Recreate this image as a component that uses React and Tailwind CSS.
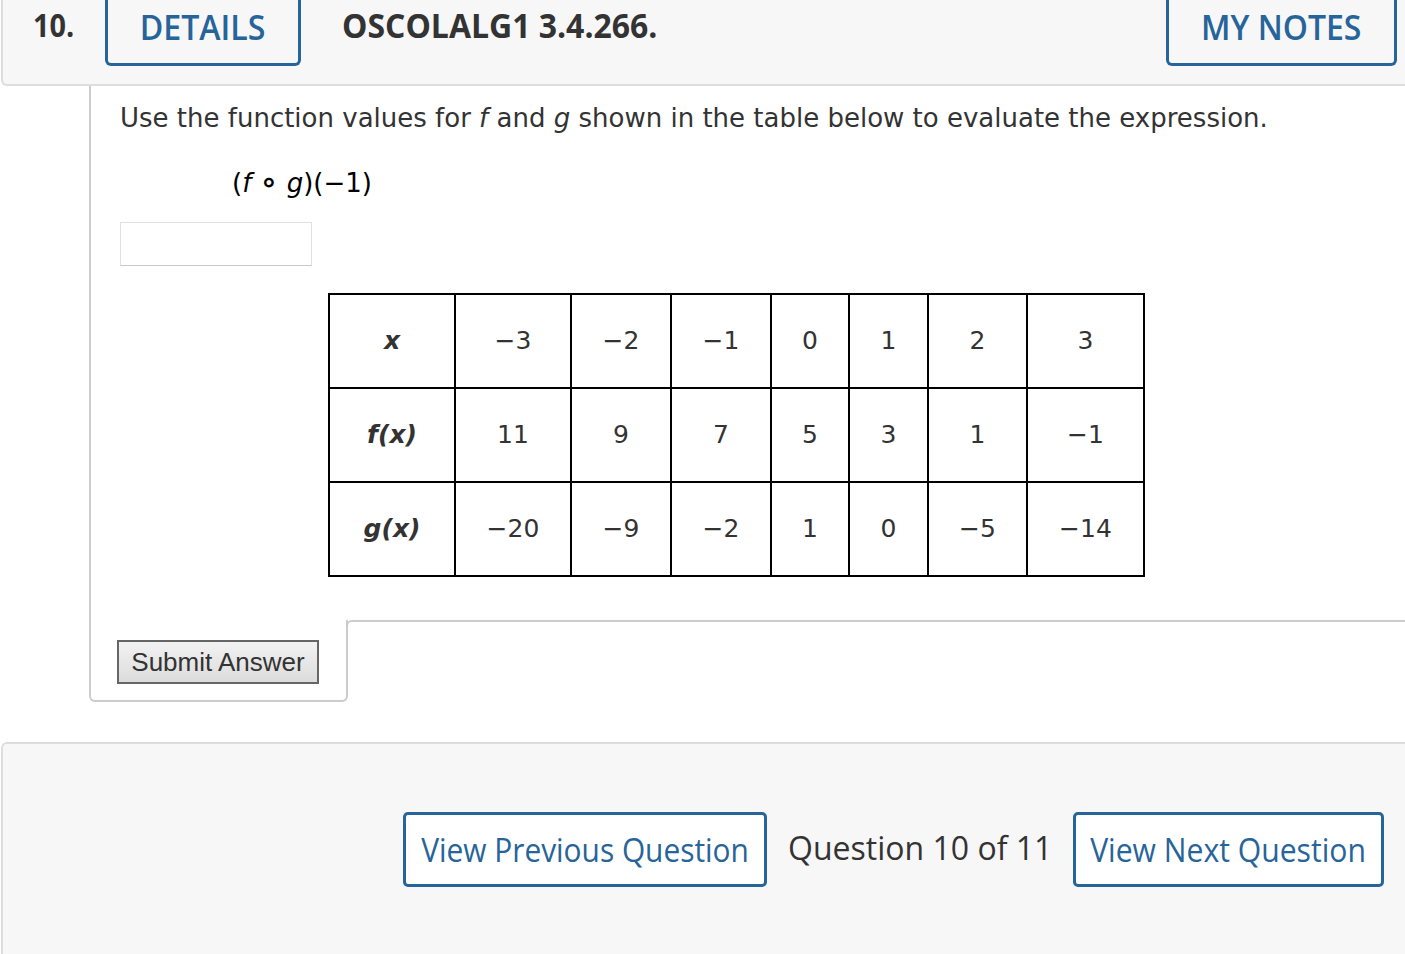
import React from 'react'

const blue = 'text-[#26649a]'

function Cell({ children, w, head }) {
  return (
    <td className={`border-2 border-black text-center align-middle ${w} ${head ? 'font-bold italic' : ''}`}>
      {children}
    </td>
  )
}

export default function App() {
  const widths = ['w-[126px]', 'w-[116px]', 'w-[100px]', 'w-[100px]', 'w-[78px]', 'w-[79px]', 'w-[99px]', 'w-[117px]']
  const rows = [
    [<i key="x">x</i>, '−3', '−2', '−1', '0', '1', '2', '3'],
    [<span key="f"><i>f</i>(<i>x</i>)</span>, '11', '9', '7', '5', '3', '1', '−1'],
    [<span key="g"><i>g</i>(<i>x</i>)</span>, '−20', '−9', '−2', '1', '0', '−5', '−14'],
  ]

  return (
    <div className="w-[1405px] h-[954px] overflow-hidden bg-white text-[#333]">
      {/* Header */}
      <div className="ml-[1px] h-[86px] bg-[#f7f7f7] border-l-2 border-b-2 border-[#dddddd] rounded-bl-[6px] flex items-start font-['Open_Sans',sans-serif]">
        <div className="ml-[30px] mt-[3px] text-[32px] font-bold leading-[44px] inline-block scale-x-[0.9] origin-left">10.</div>
        <div className="ml-[26px] w-[196px] h-[66px] border-[3px] border-t-0 border-[#26649a] rounded-b-[6px] flex items-center justify-center">
          <span className={`inline-block text-[34px] font-semibold ${blue} scale-x-[0.945] leading-none -mt-[10px]`}>DETAILS</span>
        </div>
        <div className="ml-[41px] mt-[3px] text-[34px] font-bold leading-[44px] inline-block scale-x-[0.94] origin-left whitespace-nowrap">OSCOLALG1 3.4.266.</div>
        <div className="ml-auto mr-[8px] w-[231px] h-[66px] border-[3px] border-t-0 border-[#26649a] rounded-b-[6px] flex items-center justify-center">
          <span className={`inline-block text-[34px] font-semibold ${blue} scale-x-[0.94] leading-none -mt-[10px] whitespace-nowrap`}>MY NOTES</span>
        </div>
      </div>

      {/* Question */}
      <div className="ml-[89px] font-['DejaVu_Sans',Verdana,sans-serif]">
        <div className="border-l-2 border-[#cccccc] pl-[29px] pt-[13px] pb-[43px]">
          <p className="text-[26px] leading-[38px] whitespace-nowrap">
            Use the function values for <i>f</i> and <i>g</i> shown in the table below to evaluate the expression.
          </p>
          <p className="mt-[27px] ml-[112px] text-[26px] leading-[38px] text-black">
            (<i>f</i> <span className="text-[30px] leading-none font-bold">∘</span> <i>g</i>)(−1)
          </p>
          <div className="mt-[20px] w-[192px] h-[44px] border border-[#e0e0e0] border-b-[#c8c8c8]" />
          <table className="mt-[27px] ml-[208px] border-collapse text-[25px]">
            <tbody>
              {rows.map((r, i) => (
                <tr key={i} className="h-[94px]">
                  {r.map((c, j) => (
                    <Cell key={j} w={widths[j]} head={j === 0}>{c}</Cell>
                  ))}
                </tr>
              ))}
            </tbody>
          </table>
        </div>
        <div className="flex">
          <div className="w-[259px] h-[82px] border-l-2 border-r-2 border-b-2 border-[#cccccc] rounded-b-[6px] pl-[26px] pt-[20px]">
            <button className="h-[44px] w-[202px] border-2 border-[#666] bg-gradient-to-b from-[#f2f2f2] to-[#dcdcdc] text-[26px] text-[#333] font-['Liberation_Sans',Arial,sans-serif] leading-none">
              Submit Answer
            </button>
          </div>
          <div className="flex-1 h-[10px] -ml-[2px] border-t-2 border-l-2 border-[#cccccc] rounded-tl-[6px]" />
        </div>
      </div>

      {/* Footer nav */}
      <div className="mt-[40px] ml-[1px] h-[230px] bg-[#f7f7f7] border-t-2 border-l-2 border-[#dddddd] rounded-tl-[6px] flex items-start justify-end pr-[21px] pt-[68px] font-['Open_Sans',sans-serif]">
        <button className={`w-[364px] h-[75px] bg-white border-[3px] border-[#26649a] rounded-[5px] flex items-center justify-center ${blue}`}>
          <span className="inline-block text-[33px] scale-x-[0.905] whitespace-nowrap">View Previous Question</span>
        </button>
        <div className="w-[306px] h-[75px] flex items-center justify-center">
          <span className="inline-block text-[33px] scale-x-[0.97] whitespace-nowrap -mt-[4px]">Question 10 of 11</span>
        </div>
        <button className={`w-[311px] h-[75px] bg-white border-[3px] border-[#26649a] rounded-[5px] flex items-center justify-center ${blue}`}>
          <span className="inline-block text-[33px] scale-x-[0.913] whitespace-nowrap">View Next Question</span>
        </button>
      </div>
    </div>
  )
}
